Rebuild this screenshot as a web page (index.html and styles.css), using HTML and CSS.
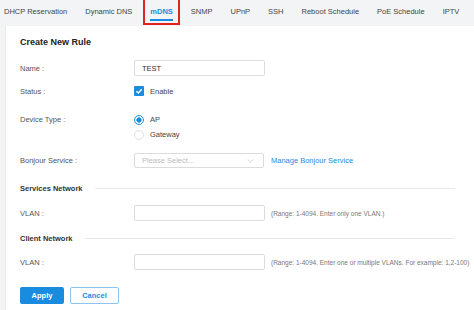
FILE: index.html
```html
<!DOCTYPE html>
<html lang="en">
<head>
    <meta charset="UTF-8">
    <title>mDNS</title>
    <link rel="stylesheet" href="styles.css">
</head>
<body>
    <div class="tabs">
        <a href="#">DHCP Reservation</a>
        <a href="#">Dynamic DNS</a>
        <a href="#" class="active">mDNS</a>
        <a href="#">SNMP</a>
        <a href="#">UPnP</a>
        <a href="#">SSH</a>
        <a href="#">Reboot Schedule</a>
        <a href="#">PoE Schedule</a>
        <a href="#">IPTV</a>
    </div>

    <div class="card">
        <h2 class="title">Create New Rule</h2>

        <div class="row row-name">
            <label>Name :</label>
            <div class="input">TEST</div>
        </div>

        <div class="row row-status">
            <label>Status :</label>
            <span class="checkbox">
                <svg viewBox="0 0 10 10" width="10" height="10"><path d="M2.4 5.2 L4.3 7 L7.7 3.2" fill="none" stroke="#fff" stroke-width="1.4"/></svg>
            </span>
            <span class="opt">Enable</span>
        </div>

        <div class="row row-type">
            <label>Device Type :</label>
            <div class="radios">
                <div class="radio-item"><span class="radio checked"></span><span class="opt">AP</span></div>
                <div class="radio-item"><span class="radio"></span><span class="opt">Gateway</span></div>
            </div>
        </div>

        <div class="row row-bonjour">
            <label>Bonjour Service :</label>
            <div class="input select">
                <span class="placeholder">Please Select...</span>
                <svg viewBox="0 0 8 5" width="7" height="4"><path d="M0.5 0.5 L4 4 L7.5 0.5" fill="none" stroke="#c4c4c4" stroke-width="0.9"/></svg>
            </div>
            <a href="#" class="link">Manage Bonjour Service</a>
        </div>

        <div class="section sec-services"><span>Services Network</span><i></i></div>

        <div class="row row-vlan1">
            <label>VLAN :</label>
            <div class="input"></div>
            <span class="hint">(Range: 1-4094. Enter only one VLAN.)</span>
        </div>

        <div class="section sec-client"><span>Client Network</span><i></i></div>

        <div class="row row-vlan2">
            <label>VLAN :</label>
            <div class="input"></div>
            <span class="hint">(Range: 1-4094. Enter one or multiple VLANs. For example: 1,2-100)</span>
        </div>

        <div class="buttons">
            <button class="btn-apply">Apply</button>
            <button class="btn-cancel">Cancel</button>
        </div>
    </div>
</body>
</html>
```

FILE: styles.css
```css
* {
    margin: 0;
    padding: 0;
    box-sizing: border-box;
    font-family: 'Liberation Sans', Arial, sans-serif;
}

body {
    background: #f3f4f6;
    color: #555;
    width: 474px;
    height: 310px;
    overflow: hidden;
}

a {
    text-decoration: none;
}

.tabs {
    display: flex;
    gap: 18px;
    height: 26px;
    padding-left: 4px;
    align-items: center;
    white-space: nowrap;
}

.tabs a {
    position: relative;
    font-size: 7.5px;
    color: #444;
    line-height: 10px;
    margin-top: -3px;
}

.tabs .active {
    color: #1a8cdf;
    font-weight: bold;
}

.tabs .active::before {
    content: "";
    position: absolute;
    left: 0;
    right: 0;
    bottom: -4px;
    height: 2px;
    background: #1a8cdf;
}

.tabs .active::after {
    content: "";
    position: absolute;
    left: -7px;
    right: -7px;
    top: -9px;
    bottom: -8px;
    border: 2px solid #e0241f;
}

.card {
    background: #fff;
    margin-left: 5px;
    height: 284px;
    border-left: 1px solid #ececec;
    padding: 10px 19px 0 14px;
}

.title {
    font-size: 9px;
    font-weight: bold;
    color: #222;
    line-height: 12px;
}

.row {
    display: flex;
    align-items: center;
}

.row label {
    width: 114px;
    flex-shrink: 0;
    font-size: 7.5px;
    color: #555;
}

.input {
    width: 131px;
    height: 16px;
    flex-shrink: 0;
    border: 1px solid #dcdcdc;
    border-radius: 2px;
    font-size: 7.5px;
    color: #333;
    padding-left: 7px;
    display: flex;
    align-items: center;
}

.row-name {
    margin-top: 12px;
}

.row-status {
    margin-top: 7px;
    height: 16px;
}

.checkbox {
    width: 10px;
    height: 10px;
    background: #1a8cdf;
    border-radius: 1px;
    display: flex;
}

.opt {
    font-size: 7.5px;
    color: #444;
    margin-left: 6px;
}

.row-type {
    margin-top: 13px;
    align-items: flex-start;
}

.row-type label {
    margin-top: 3px;
}

.radio-item {
    display: flex;
    align-items: center;
    height: 15px;
}

.radio {
    width: 10px;
    height: 10px;
    border-radius: 50%;
    border: 1px solid #e3e3e3;
}

.radio.checked {
    border-color: #1a8cdf;
    background: radial-gradient(circle, #1a8cdf 0 2.4px, #fff 2.9px);
}

.row-bonjour {
    margin-top: 11px;
}

.select {
    width: 130px;
    height: 15px;
    justify-content: space-between;
    padding-right: 9px;
}

.placeholder {
    color: #bdbdbd;
}

.link {
    font-size: 7.5px;
    color: #1a8cdf;
    margin-left: 7px;
}

.section {
    display: flex;
    align-items: center;
    height: 12px;
    margin-top: 14px;
}

.section span {
    font-size: 7.5px;
    font-weight: bold;
    color: #333;
    white-space: nowrap;
}

.section i {
    flex: 1;
    height: 1px;
    background: #e8e8e8;
    margin-left: 12px;
}

.sec-client {
    margin-top: 11px;
}

.row-vlan1 {
    margin-top: 11px;
}

.row-vlan2 {
    margin-top: 10px;
}

.hint {
    font-size: 6.5px;
    color: #777;
    margin-left: 6px;
    white-space: nowrap;
}

.buttons {
    display: flex;
    gap: 6px;
    margin-top: 17px;
}

.buttons button {
    height: 17px;
    border-radius: 2px;
    font-size: 7.5px;
    font-weight: bold;
    cursor: pointer;
}

.btn-apply {
    width: 44px;
    background: #1a8cdf;
    border: none;
    color: #fff;
}

.btn-cancel {
    width: 49px;
    background: #fff;
    border: 1px solid #8ec4ee;
    color: #1a8cdf;
}
```
